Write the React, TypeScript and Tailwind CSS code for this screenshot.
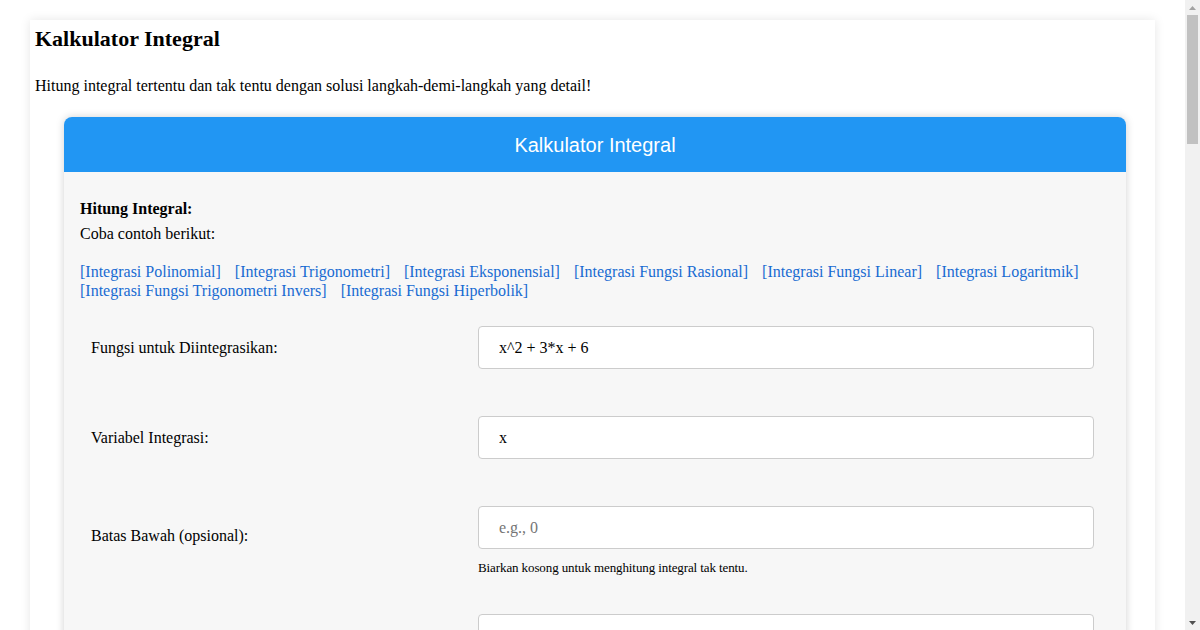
import React from "react";

const EXAMPLES = [
  "Integrasi Polinomial",
  "Integrasi Trigonometri",
  "Integrasi Eksponensial",
  "Integrasi Fungsi Rasional",
  "Integrasi Fungsi Linear",
  "Integrasi Logaritmik",
  "Integrasi Fungsi Trigonometri Invers",
  "Integrasi Fungsi Hiperbolik",
];

const serif = { fontFamily: '"Liberation Serif", "Times New Roman", serif' };
const sans = { fontFamily: '"Liberation Sans", Arial, sans-serif' };

function Field({
  label,
  value,
  placeholder,
  help,
}: {
  label: string;
  value?: string;
  placeholder?: string;
  help?: string;
}) {
  return (
    <div className={`flex items-center ${help ? "mb-[39px]" : "mb-[47px]"}`}>
      <label className={`w-[398px] pl-[11px] text-[16px] leading-[18px] text-black ${help ? "mb-[9px]" : ""}`}>
        {label}
      </label>
      <div className="w-[616px]">
        <input
          readOnly
          defaultValue={value}
          placeholder={placeholder}
          className="block h-[43px] w-full rounded-[4px] border border-[#cccccc] bg-white px-[20px] text-[16px] text-black outline-none placeholder:text-[#757575]"
          style={serif}
        />
        {help && <div className="mt-[11px] text-[13px] leading-[15px] tracking-[-0.1px] text-black">{help}</div>}
      </div>
    </div>
  );
}

// fake page scrollbar (the screenshot hides the real one)
function Scrollbar() {
  return (
    <div className="flex h-[630px] w-[15px] shrink-0 flex-col items-center bg-[#f1f1f1]">
      <div className="flex h-[15px] w-full items-center justify-center">
        <svg width="7" height="4" viewBox="0 0 7 4">
          <polygon points="0,4 3.5,0 7,4" fill="#a3a3a3" />
        </svg>
      </div>
      <div className="h-[129px] w-[11px] bg-[#c1c1c1]" />
      <div className="flex-1" />
      <div className="flex h-[15px] w-full items-center justify-center">
        <svg width="7" height="4" viewBox="0 0 7 4">
          <polygon points="0,0 7,0 3.5,4" fill="#505050" />
        </svg>
      </div>
    </div>
  );
}

export default function App() {
  return (
    <div className="flex h-[630px] overflow-hidden bg-white text-black" style={serif}>
      <div className="h-[630px] flex-1 overflow-hidden">
        <div className="pt-[20px] pb-[40px]">
          <div className="mx-[30px] w-[1125px] bg-white p-[5px] shadow-[0_0_10px_rgba(0,0,0,0.1)]">
            <h2 className="m-0 text-[22px] font-bold leading-[27px]">Kalkulator Integral</h2>
            <p className="mt-[25px] text-[16px] leading-[18px]">
              Hitung integral tertentu dan tak tentu dengan solusi langkah-demi-langkah yang detail!
            </p>

            <div className="mt-[22px] ml-[29px] w-[1062px] overflow-hidden rounded-[8px] bg-[#f7f7f7] shadow-[0_0_8px_rgba(0,0,0,0.18)]">
              <div className="flex h-[55px] items-center justify-center bg-[#2196f3] text-[20px] text-white" style={sans}>
                Kalkulator Integral
              </div>

              <div className="px-[16px] pt-[28px] pb-[60px]">
                <div className="text-[16px] font-bold leading-[18px]">Hitung Integral:</div>
                <div className="mt-[7px] text-[16px] leading-[18px]">Coba contoh berikut:</div>
                <div className="mt-[19px] mb-[26px] text-[16px] leading-[19px]">
                  {EXAMPLES.map((e) => (
                    <React.Fragment key={e}>
                      <a href="#" className="mr-[10px] text-[#176bd2]">
                        [{e}]
                      </a>{" "}
                    </React.Fragment>
                  ))}
                </div>

                <Field label="Fungsi untuk Diintegrasikan:" value="x^2 + 3*x + 6" />
                <Field label="Variabel Integrasi:" value="x" />
                <Field
                  label="Batas Bawah (opsional):"
                  placeholder="e.g., 0"
                  help="Biarkan kosong untuk menghitung integral tak tentu."
                />
                <Field
                  label="Batas Atas (opsional):"
                  placeholder="e.g., 1"
                  help="Biarkan kosong untuk menghitung integral tak tentu."
                />

                <div className="flex justify-center">
                  <button className="rounded-[4px] bg-[#2196f3] px-[24px] py-[10px] text-[16px] text-white" style={sans}>
                    Hitung Integral
                  </button>
                </div>
              </div>
            </div>

            <div className="h-[2000px]" />
          </div>
        </div>
      </div>
      <Scrollbar />
    </div>
  );
}
